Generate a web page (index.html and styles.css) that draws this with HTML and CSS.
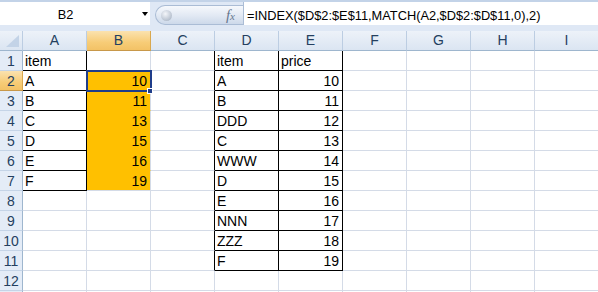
FILE: index.html
```html
<!DOCTYPE html>
<html lang="en">
<head>
    <meta charset="UTF-8">
    <title>Sheet1</title>
    <link rel="stylesheet" href="styles.css">
</head>
<body>
    <div class="formula-bar">
        <div class="name-box"><span class="name">B2</span><i class="arrow"></i></div>
        <div class="fx-pill"><span class="dimple"></span><span class="fx">f<small>x</small></span></div>
        <div class="formula">=INDEX($D$2:$E$11,MATCH(A2,$D$2:$D$11,0),2)</div>
    </div>

    <div class="sheet">
        <div class="row head">
            <div class="corner"></div><div>A</div><div class="active">B</div><div>C</div><div>D</div><div>E</div><div>F</div><div>G</div><div>H</div><div>I</div>
        </div>
        <div class="row">
            <div class="rh">1</div><div class="bx">item</div><div></div><div class="bl"></div><div class="bx">item</div><div class="bx">price</div><div></div><div></div><div></div><div></div>
        </div>
        <div class="row">
            <div class="rh active">2</div><div class="bx">A</div><div class="fill num current">10</div><div class="bl"></div><div class="bx">A</div><div class="bx num">10</div><div></div><div></div><div></div><div></div>
        </div>
        <div class="row">
            <div class="rh">3</div><div class="bx">B</div><div class="fill num">11</div><div class="bl"></div><div class="bx">B</div><div class="bx num">11</div><div></div><div></div><div></div><div></div>
        </div>
        <div class="row">
            <div class="rh">4</div><div class="bx">C</div><div class="fill num">13</div><div class="bl"></div><div class="bx">DDD</div><div class="bx num">12</div><div></div><div></div><div></div><div></div>
        </div>
        <div class="row">
            <div class="rh">5</div><div class="bx">D</div><div class="fill num">15</div><div class="bl"></div><div class="bx">C</div><div class="bx num">13</div><div></div><div></div><div></div><div></div>
        </div>
        <div class="row">
            <div class="rh">6</div><div class="bx">E</div><div class="fill num">16</div><div class="bl"></div><div class="bx">WWW</div><div class="bx num">14</div><div></div><div></div><div></div><div></div>
        </div>
        <div class="row">
            <div class="rh">7</div><div class="bx">F</div><div class="fill last num">19</div><div class="bl"></div><div class="bx">D</div><div class="bx num">15</div><div></div><div></div><div></div><div></div>
        </div>
        <div class="row">
            <div class="rh">8</div><div></div><div></div><div class="bl"></div><div class="bx">E</div><div class="bx num">16</div><div></div><div></div><div></div><div></div>
        </div>
        <div class="row">
            <div class="rh">9</div><div></div><div></div><div class="bl"></div><div class="bx">NNN</div><div class="bx num">17</div><div></div><div></div><div></div><div></div>
        </div>
        <div class="row">
            <div class="rh">10</div><div></div><div></div><div class="bl"></div><div class="bx">ZZZ</div><div class="bx num">18</div><div></div><div></div><div></div><div></div>
        </div>
        <div class="row">
            <div class="rh">11</div><div></div><div></div><div class="bl"></div><div class="bx">F</div><div class="bx num">19</div><div></div><div></div><div></div><div></div>
        </div>
        <div class="row">
            <div class="rh">12</div><div></div><div></div><div></div><div></div><div></div><div></div><div></div><div></div><div></div>
        </div>
        <div class="row">
            <div class="rh"></div><div></div><div></div><div></div><div></div><div></div><div></div><div></div><div></div><div></div>
        </div>
    </div>
</body>
</html>
```

FILE: styles.css
```css
body { margin: 0; width: 598px; height: 292px; overflow: hidden; background: #fff; font-family: "Liberation Sans", Arial, sans-serif; }

/* formula bar */
.formula-bar {
    display: flex;
    height: 31px;
    box-sizing: border-box;
    border-top: 2px solid #c3d3e8;
    padding-bottom: 6px;
    background: #dfe8f5;
    font-size: 12.8px;
}
.name-box { width: 150px; background: #fff; display: flex; align-items: center; }
.name-box .name { width: 131px; text-align: center; padding-top: 2px; }
.name-box .arrow {
    margin-left: 11px;
    width: 0; height: 0;
    border-left: 3px solid transparent;
    border-right: 3px solid transparent;
    border-top: 4px solid #000;
}
.fx-pill {
    position: relative;
    width: 88px;
    margin: 3px 0 0 5px;
    box-sizing: border-box;
    border: 1px solid #aabcd5;
    border-right: none;
    border-radius: 11px 0 0 11px;
    background: linear-gradient(#f6f8fc, #e3eaf4 50%, #cdd9ea);
    display: flex;
    align-items: center;
    justify-content: flex-end;
}
.fx-pill .dimple {
    position: absolute;
    left: 5px; top: 4px;
    width: 11px; height: 11px;
    border-radius: 50%;
    background: radial-gradient(circle at 40% 35%, #f4f6fa, #b7c1cf 70%, #9aa7b9);
}
.fx-pill .fx {
    margin-right: 8px;
    font-family: "Liberation Serif", serif;
    font-style: italic;
    font-size: 15px;
    color: #66768e;
}
.fx-pill .fx small { font-size: 11px; }
.formula {
    flex: 1;
    background: #fff;
    border-left: 1px solid #aabcd5;
    padding: 5px 0 0 3px;
    line-height: 18px;
    white-space: nowrap;
}

/* grid */
.sheet { font-size: 14px; color: #000; }
.row { display: grid; grid-template-columns: 23px repeat(9, 64px); height: 20px; }
.row > div {
    box-sizing: border-box;
    border-right: 1px solid #d4dbe7;
    border-bottom: 1px solid #d4dbe7;
    display: flex;
    align-items: flex-end;
    padding: 0 3px 0 2px;
    line-height: 17px;
    white-space: nowrap;
}
.row.head > div {
    justify-content: center;
    align-items: center;
    line-height: 19px;
    padding: 0;
    color: #243f60;
    background: linear-gradient(#edf2f9, #dbe5f2);
    border-right-color: #bccde2;
    border-bottom-color: #9eb6ce;
}
.row.head > .active, .row > .rh.active {
    background: linear-gradient(#fbe2af, #f7cc77 60%, #f3c266);
    border-right-color: #d9a84f;
    border-bottom-color: #c8984a;
}
.row.head > .corner { position: relative; }
.row.head > .corner::after {
    content: "";
    position: absolute;
    right: 3px; bottom: 3px;
    width: 13px; height: 12px;
    background: #c3d3e7;
    clip-path: polygon(100% 0, 100% 100%, 0 100%);
}
.row > .rh {
    justify-content: center;
    padding: 0;
    color: #243f60;
    background: #e4ecf7;
    border-right-color: #9eb6ce;
    border-bottom-color: #c5d4e7;
}

/* cell formats */
.row > .bx { border-right-color: #000; border-bottom-color: #000; }
.row > .bl { border-right-color: #000; }
.row > .num { justify-content: flex-end; }
.row > .fill { background: #ffc000; border-bottom-color: #ffc000; }
.row > .fill.last { border-bottom-color: #d4dbe7; }

/* active cell */
.row > .current { position: relative; }
.row > .current::before {
    content: "";
    position: absolute;
    left: -1px; top: -1px; right: -2px; bottom: -2px;
    border: 2px solid #1f3d8a;
}
.row > .current::after {
    content: "";
    position: absolute;
    right: -3px; bottom: -4px;
    width: 4px; height: 4px;
    background: #1f3d8a;
    border: 1px solid #fff;
}
```
